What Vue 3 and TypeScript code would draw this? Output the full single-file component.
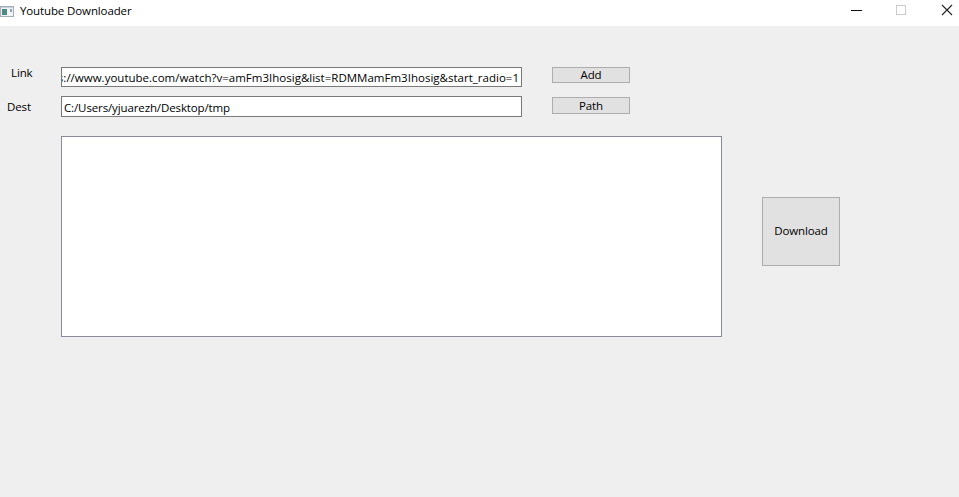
<script setup lang="ts">
const link = "https://www.youtube.com/watch?v=amFm3Ihosig&list=RDMMamFm3Ihosig&start_radio=1";
const dest = "C:/Users/yjuarezh/Desktop/tmp";
</script>

<template>
  <div class="window">
    <header class="titlebar">
      <div class="title-left">
        <svg class="app-icon" width="15" height="16" viewBox="0 0 15 16">
          <rect x="0.5" y="3.5" width="13" height="10" fill="#eef2f5" stroke="#a4aeb6" />
          <rect x="1" y="4" width="12" height="1" fill="#c4d2de" />
          <rect x="2" y="6" width="5" height="6" fill="#4f8a80" />
          <rect x="8" y="6" width="4" height="6" fill="#f4f6f8" />
          <rect x="10" y="6" width="2" height="3" fill="#8fa3b3" />
        </svg>
        <span class="title">Youtube Downloader</span>
      </div>
      <div class="controls">
        <svg class="ctl" width="46" height="21" viewBox="0 0 46 21"><path d="M30 10.5H41" stroke="#111" stroke-width="1" /></svg>
        <svg class="ctl" width="46" height="21" viewBox="0 0 46 21"><rect x="29.5" y="5.5" width="9" height="9" fill="none" stroke="#ccc" /></svg>
        <svg class="ctl" width="46" height="21" viewBox="0 0 46 21"><path d="M29 5L39 15M39 5L29 15" stroke="#222" stroke-width="1.1" fill="none" /></svg>
      </div>
    </header>

    <main class="content">
      <div class="row link-row">
        <div class="label link-label">Link</div>
        <div class="field link-field"><span class="nowrap">{{ link }}</span></div>
        <button class="btn small">Add</button>
      </div>

      <div class="row dest-row">
        <div class="label dest-label">Dest</div>
        <div class="field dest-field"><span class="nowrap">{{ dest }}</span></div>
        <button class="btn small path">Path</button>
      </div>

      <div class="row output-row">
        <div class="output"></div>
        <button class="btn download">Download</button>
      </div>
    </main>
  </div>
</template>

<style>
html, body { margin: 0; padding: 0; background: #efefef; }
</style>

<style scoped>
.window {
  width: 959px;
  height: 497px;
  display: flex;
  flex-direction: column;
  background: #efefef;
  font-family: "Open Sans", "Noto Sans", sans-serif;
  font-size: 11.5px;
  letter-spacing: -0.12px;
  color: #000;
  overflow: hidden;
}
.titlebar {
  height: 26px;
  flex: none;
  background: #fff;
  display: flex;
  justify-content: space-between;
  align-items: flex-start;
}
.title-left { display: flex; align-items: center; height: 21px; }
.app-icon { margin-right: 5px; }
.title { line-height: 21px; }
.controls { display: flex; }
.ctl { display: block; }
.content {
  flex: 1;
  display: flex;
  flex-direction: column;
  padding-top: 41px;
}
.row { display: flex; align-items: flex-start; }
.link-row { height: 20px; }
.dest-row { height: 21px; margin-top: 9px; }
.output-row { margin-top: 19px; padding-left: 61px; }
.label { width: 61px; flex: none; box-sizing: border-box; line-height: 16px; }
.link-label { padding-left: 11px; margin-top: -2px; }
.dest-label { padding-left: 7px; margin-top: 3px; }
.field {
  box-sizing: border-box;
  width: 461px;
  height: 100%;
  flex: none;
  background: #fff;
  border: 1px solid #7a7a7a;
  display: flex;
  align-items: center;
  overflow: hidden;
  padding: 0 2px;
}
.nowrap { white-space: nowrap; flex: none; }
.link-field { justify-content: flex-end; letter-spacing: 0.01px; }
.dest-field { padding-top: 1px; }
.btn {
  box-sizing: border-box;
  background: #e1e1e1;
  border: 1px solid #adadad;
  padding: 0;
  font: inherit;
  letter-spacing: inherit;
  color: inherit;
  flex: none;
}
.small { width: 78px; height: 16px; line-height: 14px; margin-left: 30px; }
.path { height: 17px; margin-top: 1px; }
.output {
  box-sizing: border-box;
  width: 661px;
  height: 201px;
  flex: none;
  background: #fff;
  border: 1px solid #8a8a9a;
}
.download { width: 78px; height: 69px; margin-top: 61px; margin-left: 40px; padding-bottom: 2px; }
</style>
